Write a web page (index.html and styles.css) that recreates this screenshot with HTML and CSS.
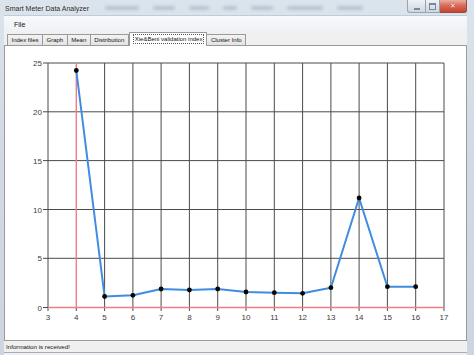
FILE: index.html
```html
<!DOCTYPE html>
<html>
<head>
<meta charset="utf-8">
<link rel="stylesheet" href="styles.css">
</head>
<body>
<div class="window">
  <div class="titlebar">
    <span class="title">Smart Meter Data Analyzer</span>
    <div class="glass">
      <span class="smudge w1"></span><span class="smudge w2"></span><span class="smudge w3"></span><span class="smudge w4"></span><span class="smudge w5"></span><span class="smudge w6"></span><span class="smudge w7"></span>
    </div>
    <div class="controls">
      <div class="btn min"><span class="minbar"></span></div>
      <div class="btn max"><span class="maxbox"></span></div>
      <div class="btn close"><span class="x">✕</span></div>
    </div>
  </div>
  <div class="client">
    <div class="menubar"><span class="menuitem">File</span></div>
    <div class="tabs">
      <div class="tab">Index files</div>
      <div class="tab">Graph</div>
      <div class="tab">Mean</div>
      <div class="tab">Distribution</div>
      <div class="tab selected"><span class="focus">Xie&amp;Beni validation index</span></div>
      <div class="tab">Cluster Info</div>
    </div>
    <div class="page">
      <svg class="chart" width="461" height="294" viewBox="5 46 461 294" xmlns="http://www.w3.org/2000/svg">
        <g class="grid">
          <line x1="48" y1="63" x2="48" y2="311"/>
          <line x1="104.6" y1="63" x2="104.6" y2="311"/>
          <line x1="132.9" y1="63" x2="132.9" y2="311"/>
          <line x1="161.1" y1="63" x2="161.1" y2="311"/>
          <line x1="189.4" y1="63" x2="189.4" y2="311"/>
          <line x1="217.7" y1="63" x2="217.7" y2="311"/>
          <line x1="246" y1="63" x2="246" y2="311"/>
          <line x1="274.3" y1="63" x2="274.3" y2="311"/>
          <line x1="302.6" y1="63" x2="302.6" y2="311"/>
          <line x1="330.9" y1="63" x2="330.9" y2="311"/>
          <line x1="359.1" y1="63" x2="359.1" y2="311"/>
          <line x1="387.4" y1="63" x2="387.4" y2="311"/>
          <line x1="415.7" y1="63" x2="415.7" y2="311"/>
          <line x1="444" y1="63" x2="444" y2="311"/>
          <line x1="76.3" y1="307.5" x2="76.3" y2="311"/>
          <line x1="43" y1="63" x2="444" y2="63"/>
          <line x1="43" y1="111.8" x2="444" y2="111.8"/>
          <line x1="43" y1="160.6" x2="444" y2="160.6"/>
          <line x1="43" y1="209.5" x2="444" y2="209.5"/>
          <line x1="43" y1="258.3" x2="444" y2="258.3"/>
          <line x1="43" y1="307.5" x2="48" y2="307.5"/>
        </g>
        <g class="redlines">
          <line x1="76.3" y1="63" x2="76.3" y2="307.5"/>
          <line x1="48.5" y1="307.5" x2="443.5" y2="307.5"/>
        </g>
        <polyline class="series" points="76.3,70.5 104.6,296.5 132.9,295.3 161.1,289 189.4,290 217.7,289 246,292 274.3,292.7 302.6,293.3 330.9,287.7 359.1,198 387.4,286.7 415.7,286.7"/>
        <g class="dots">
          <circle cx="76.3" cy="70.5" r="2.4"/>
          <circle cx="104.6" cy="296.5" r="2.4"/>
          <circle cx="132.9" cy="295.3" r="2.4"/>
          <circle cx="161.1" cy="289" r="2.4"/>
          <circle cx="189.4" cy="290" r="2.4"/>
          <circle cx="217.7" cy="289" r="2.4"/>
          <circle cx="246" cy="292" r="2.4"/>
          <circle cx="274.3" cy="292.7" r="2.4"/>
          <circle cx="302.6" cy="293.3" r="2.4"/>
          <circle cx="330.9" cy="287.7" r="2.4"/>
          <circle cx="359.1" cy="198" r="2.4"/>
          <circle cx="387.4" cy="286.7" r="2.4"/>
          <circle cx="415.7" cy="286.7" r="2.4"/>
        </g>
        <g class="ylabels">
          <text x="42" y="66">25</text>
          <text x="42" y="114.8">20</text>
          <text x="42" y="163.6">15</text>
          <text x="42" y="212.5">10</text>
          <text x="42" y="261.3">5</text>
          <text x="42" y="310.5">0</text>
        </g>
        <g class="xlabels">
          <text x="48" y="320">3</text>
          <text x="76.3" y="320">4</text>
          <text x="104.6" y="320">5</text>
          <text x="132.9" y="320">6</text>
          <text x="161.1" y="320">7</text>
          <text x="189.4" y="320">8</text>
          <text x="217.7" y="320">9</text>
          <text x="246" y="320">10</text>
          <text x="274.3" y="320">11</text>
          <text x="302.6" y="320">12</text>
          <text x="330.9" y="320">13</text>
          <text x="359.1" y="320">14</text>
          <text x="387.4" y="320">15</text>
          <text x="415.7" y="320">16</text>
          <text x="444" y="320">17</text>
        </g>
      </svg>
    </div>
    <div class="status">Information is received!</div>
  </div>
</div>
</body>
</html>
```
FILE: styles.css
```css
html, body {
  margin: 0;
  padding: 0;
}
body {
  width: 474px;
  height: 355px;
  overflow: hidden;
  background: #d3dce6;
  font-family: "Liberation Sans", Arial, sans-serif;
}
.window {
  width: 474px;
  height: 355px;
  display: flex;
  flex-direction: column;
  background: linear-gradient(180deg, #dbe3ec 0%, #d2dbe5 40%, #cdd6e0 100%);
}
.titlebar {
  height: 15px;
  display: flex;
  align-items: center;
  flex-shrink: 0;
}
.title {
  font-size: 7px;
  color: #1c1c1c;
  margin-left: 5px;
  padding-top: 1px;
  white-space: nowrap;
  text-shadow: 0 0 2px #fff;
}
.glass {
  flex: 1;
  display: flex;
  align-items: center;
  gap: 14px;
  padding-left: 16px;
  height: 15px;
}
.smudge {
  height: 4px;
  background: #9aa5b2;
  border-radius: 2px;
  opacity: 0.5;
  filter: blur(1.4px);
}
.w1 { width: 34px; }
.w2 { width: 22px; }
.w3 { width: 20px; }
.w4 { width: 14px; }
.w5 { width: 22px; }
.w6 { width: 36px; }
.w7 { width: 26px; }
.controls {
  display: flex;
  align-self: flex-start;
  margin-right: 7px;
  height: 14px;
}
.btn {
  height: 13px;
  box-sizing: border-box;
  border: 1px solid #97a3b1;
  border-top: none;
  display: flex;
  align-items: center;
  justify-content: center;
  background: linear-gradient(180deg, #eef2f6 0%, #dde4eb 50%, #ced7e1 100%);
}
.min {
  width: 19px;
  border-bottom-left-radius: 3px;
}
.max {
  width: 14px;
  border-left: none;
}
.close {
  width: 27px;
  border-left: none;
  border-color: #9a4a40;
  border-bottom-right-radius: 3px;
  background: linear-gradient(180deg, #eab0a2 0%, #d96c58 45%, #c8432f 100%);
}
.minbar {
  width: 6px;
  height: 2px;
  background: #7b8796;
  margin-top: 5px;
}
.maxbox {
  width: 5px;
  height: 4px;
  border: 1px solid #7b8796;
  border-top-width: 2px;
}
.x {
  color: #fff;
  font-size: 7px;
  font-weight: bold;
  font-family: "DejaVu Sans", sans-serif;
  text-shadow: 0 0 1px #7a2015;
}
.client {
  margin-left: 4px;
  width: 463px;
  flex: 1;
  display: flex;
  flex-direction: column;
  background: #f0f0f0;
}
.menubar {
  height: 17px;
  display: flex;
  align-items: center;
  background: linear-gradient(180deg, #f8f9fb 0%, #eef1f5 100%);
  border-top: 1px solid #c2ccd6;
  box-sizing: border-box;
}
.menuitem {
  font-size: 7px;
  color: #111;
  margin-left: 10px;
  padding-top: 1px;
}
.tabs {
  height: 13px;
  display: flex;
  align-items: flex-end;
  padding-left: 3px;
  position: relative;
  z-index: 1;
}
.tab {
  height: 11px;
  box-sizing: border-box;
  border: 1px solid #9a9a9a;
  border-bottom: none;
  margin-right: -1px;
  padding: 0 3.5px;
  font-size: 6px;
  color: #111;
  display: flex;
  align-items: center;
  background: linear-gradient(180deg, #f3f3f3 0%, #e4e4e4 100%);
  white-space: nowrap;
}
.tab.selected {
  height: 14px;
  margin: 0 -1px 0 1px;
  margin-bottom: -1px;
  padding: 0 2px 2px 3px;
  background: #fff;
  position: relative;
  z-index: 2;
}
.focus {
  border: 1px dotted #555;
  padding: 0 1px;
  line-height: 8px;
}
.page {
  height: 296px;
  box-sizing: border-box;
  border: 1px solid #9a9a9a;
  background: #fff;
}
.chart {
  display: block;
}
.grid line {
  stroke: #4a4a4a;
  stroke-width: 1;
}
.redlines line {
  stroke: #f07c86;
  stroke-width: 1.4;
}
.series {
  fill: none;
  stroke: #3f8ce0;
  stroke-width: 2;
  stroke-linejoin: round;
  stroke-linecap: round;
}
.dots circle {
  fill: #050505;
}
.ylabels text {
  font-family: "Liberation Sans", Arial, sans-serif;
  font-size: 8px;
  fill: #3a3a3a;
  text-anchor: end;
}
.xlabels text {
  font-family: "Liberation Sans", Arial, sans-serif;
  font-size: 8px;
  fill: #3a3a3a;
  text-anchor: middle;
}
.status {
  height: 11px;
  font-size: 6.2px;
  color: #111;
  padding-left: 2px;
  display: flex;
  align-items: center;
  border-bottom: 1px solid #a5adb8;
}
```
